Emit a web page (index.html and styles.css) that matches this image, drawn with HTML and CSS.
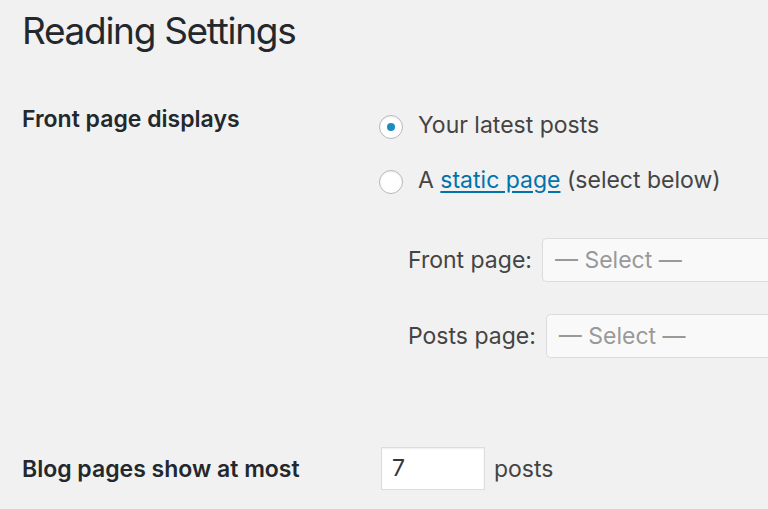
FILE: index.html
```html
<!DOCTYPE HTML>
<html>
<head>
  <meta charset="utf-8">
  <title>Reading Settings</title>
  <link rel="stylesheet" href="styles.css">
</head>
<body>
<div class="wrap">
  <h1>Reading Settings</h1>
  <form class="form-table">
    <div class="row row-front">
      <div class="th">Front page displays</div>
      <div class="td">
        <label class="radio-line">
          <span class="radio checked"></span>
          <span>Your latest posts</span>
        </label>
        <label class="radio-line">
          <span class="radio"></span>
          <span>A <a href="#">static page</a> (select below)</span>
        </label>
        <ul class="sub-pages">
          <li><span class="page-label">Front page:</span><span class="select">— Select —</span></li>
          <li><span class="page-label">Posts page:</span><span class="select">— Select —</span></li>
        </ul>
      </div>
    </div>
    <div class="row row-blog">
      <div class="th">Blog pages show at most</div>
      <div class="td td-inline">
        <span class="small-text">7</span>
        <span>posts</span>
      </div>
    </div>
  </form>
</div>
</body>
</html>
```

FILE: styles.css
```css
/*base*/
html,body{margin:0;padding:0;}
body{
	width:768px;
	height:509px;
	overflow:hidden;
	background:#f1f1f1;
	color:#444;
	font-family:Inter,"Noto Sans",sans-serif;
	font-size:23px;
	white-space:nowrap;
}
a{color:#0073aa;text-decoration:underline;text-underline-offset:3px;}

/*1.heading*/
.wrap{padding-left:22px;}
h1{
	margin:0;
	padding-top:8px;
	font-size:37px;
	line-height:45px;
	font-weight:400;
	letter-spacing:-1.3px;
	color:#23282d;
}

/*2.form rows*/
.row{
	display:grid;
	grid-template-columns:357px 1fr;
}
.th{
	line-height:30px;
	font-weight:600;
	color:#23282d;
}
.row-front{margin-top:51px;align-items:start;}
.row-front>.td{padding-top:6px;}

/*2-1.radios*/
.radio-line{
	display:flex;
	align-items:flex-start;
	line-height:30px;
}
.radio-line+.radio-line{margin-top:25px;}
.radio{
	display:flex;
	flex-shrink:0;
	align-items:center;
	justify-content:center;
	width:24px;
	height:24px;
	margin:5px 15px 0 0;
	box-sizing:border-box;
	border:1px solid #b4b9be;
	border-radius:50%;
	background:#fff;
	box-shadow:inset 0 1px 2px rgba(0,0,0,.07);
}
.radio.checked::before{
	content:"";
	width:8px;
	height:8px;
	border-radius:50%;
	background:#1e8cbe;
}

/*2-2.page selects (cut off by the right edge)*/
.sub-pages{
	list-style:none;
	margin:43px 0 0 29px;
	padding:0;
}
.sub-pages li{
	display:flex;
	align-items:center;
	gap:10px;
}
.sub-pages li+li{margin-top:32px;}
.page-label{flex-shrink:0;}
.select{
	display:block;
	flex:1 1 auto;
	height:44px;
	box-sizing:border-box;
	padding-left:12px;
	line-height:42px;
	border:1px solid #dcdcdc;
	border-right:0;
	border-radius:5px 0 0 5px;
	background:#f9f9f9;
	color:#999;
}

/*2-3.blog pages*/
.row-blog{margin-top:89px;align-items:center;}
.td-inline{
	display:flex;
	align-items:center;
	gap:9px;
	margin-left:2px;
}
.small-text{
	display:block;
	flex-shrink:0;
	width:104px;
	height:43px;
	box-sizing:border-box;
	padding-left:10px;
	line-height:41px;
	border:1px solid #ddd;
	background:#fff;
	box-shadow:inset 0 1px 2px rgba(0,0,0,.07);
	color:#32373c;
}
```
